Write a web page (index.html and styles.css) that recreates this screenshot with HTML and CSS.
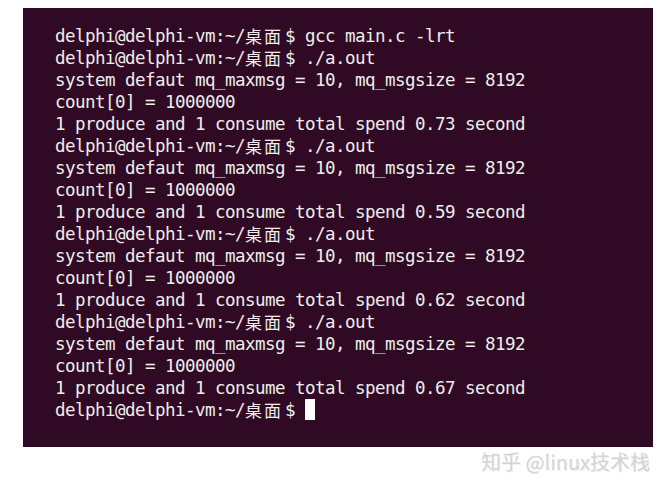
FILE: index.html
```html
<!DOCTYPE html>
<html>
<head>
<meta charset="utf-8">
<link rel="stylesheet" href="styles.css">
</head>
<body>
<div class="term">
<div class="line">delphi@delphi-vm:~/<span class="cjk">桌面</span>$ gcc main.c -lrt</div>
<div class="line">delphi@delphi-vm:~/<span class="cjk">桌面</span>$ ./a.out</div>
<div class="line">system defaut mq_maxmsg = 10, mq_msgsize = 8192</div>
<div class="line">count[0] = 1000000</div>
<div class="line">1 produce and 1 consume total spend 0.73 second</div>
<div class="line">delphi@delphi-vm:~/<span class="cjk">桌面</span>$ ./a.out</div>
<div class="line">system defaut mq_maxmsg = 10, mq_msgsize = 8192</div>
<div class="line">count[0] = 1000000</div>
<div class="line">1 produce and 1 consume total spend 0.59 second</div>
<div class="line">delphi@delphi-vm:~/<span class="cjk">桌面</span>$ ./a.out</div>
<div class="line">system defaut mq_maxmsg = 10, mq_msgsize = 8192</div>
<div class="line">count[0] = 1000000</div>
<div class="line">1 produce and 1 consume total spend 0.62 second</div>
<div class="line">delphi@delphi-vm:~/<span class="cjk">桌面</span>$ ./a.out</div>
<div class="line">system defaut mq_maxmsg = 10, mq_msgsize = 8192</div>
<div class="line">count[0] = 1000000</div>
<div class="line">1 produce and 1 consume total spend 0.67 second</div>
<div class="line">delphi@delphi-vm:~/<span class="cjk">桌面</span>$ <span class="cursor"></span></div>
</div>
<div class="mark">知乎 @linux技术栈</div>
</body>
</html>
```
FILE: styles.css
```css
html, body {
  margin: 0;
  padding: 0;
  background: #ffffff;
}
.term {
  margin: 8px 0 0 23px;
  width: 630px;
  height: 439px;
  box-sizing: border-box;
  padding: 17px 0 0 32px;
  background: #300a24;
  color: #eeeeec;
  font-family: "DejaVu Sans Mono", monospace;
  font-size: 17.5px;
  letter-spacing: -0.535px;
  line-height: 22px;
}
.line {
  height: 22px;
  white-space: pre;
}
.cjk {
  display: inline-block;
  width: 40px;
  font-family: "Noto Sans CJK SC", sans-serif;
  font-size: 17px;
  letter-spacing: 2px;
  vertical-align: top;
}
.cursor {
  display: inline-block;
  width: 10px;
  height: 21px;
  background: #ffffff;
  vertical-align: top;
}
.mark {
  width: 650px;
  text-align: right;
  margin-top: 2px;
  font-family: "Noto Sans CJK SC", sans-serif;
  font-size: 20px;
  line-height: 26px;
  color: #d4d4d4;
  text-shadow: 1px 1px 0 #f2f2f2;
}
```
